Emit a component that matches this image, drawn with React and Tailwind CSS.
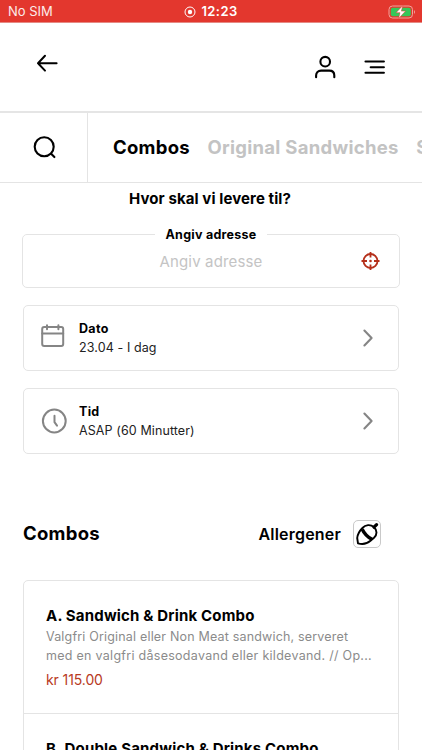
import React, { useState } from 'react';

const categories = ['Combos', 'Original Sandwiches', 'Salater'];

const ChevronIcon = () => (
  <svg width="12" height="20" viewBox="0 0 12 20" fill="none" stroke="#858585" strokeWidth="2.1" strokeLinecap="round" strokeLinejoin="round">
    <path d="M2.4 2.6 L9.6 10 L2.4 17.4" />
  </svg>
);

const CalendarIcon = () => (
  <svg className="-mt-[5px]" width="26" height="26" viewBox="0 0 26 26" fill="none" stroke="#858585" strokeWidth="2" strokeLinecap="round">
    <rect x="1.2" y="4" width="21" height="19" rx="2" />
    <path d="M1.2 10.5 H22.2 M6 2.2 V6.2 M17.4 2.2 V6.2" />
  </svg>
);

const ClockIcon = () => (
  <svg width="26" height="26" viewBox="0 0 26 26" fill="none" stroke="#858585" strokeWidth="2" strokeLinecap="round" strokeLinejoin="round">
    <circle cx="13.3" cy="13" r="11.4" />
    <path d="M13.5 7.8 V14.2 L16 17.6" />
  </svg>
);

const StatusBar = () => (
  <div className="relative flex h-[23px] items-center justify-between border-b border-[#e58a84] bg-[#e3372e] pr-[6px] pl-2 text-white">
    <span className="mt-[2px] text-[13px] opacity-90">No SIM</span>
    <div className="absolute inset-x-0 top-0 flex h-6 items-center justify-center gap-[5px]">
      <svg width="12" height="12" viewBox="0 0 12 12" fill="none" stroke="white">
        <circle cx="6" cy="6" r="5" strokeWidth="1" />
        <circle cx="6" cy="6" r="2.2" fill="white" stroke="none" />
      </svg>
      <span className="text-[13px] font-semibold tracking-[0.4px]">12:23</span>
    </div>
    <svg className="mt-px" width="28" height="14" viewBox="0 0 28 14">
      <rect x="1" y="1" width="23.5" height="12" rx="3.5" fill="none" stroke="#f0a39b" />
      <rect x="2.8" y="2.8" width="20" height="8.4" rx="2" fill="#35c759" />
      <path d="M26 5 Q28 7 26 9 Z" fill="#f0a39b" />
      <path d="M14.8 .6 L8 7.7 H12 L10.6 13.4 L17.6 6.1 H13.4 Z" fill="white" stroke="#e3372e" strokeWidth=".5" />
    </svg>
  </div>
);

const Header = () => (
  <header className="flex h-[90px] items-start justify-between border-b-2 border-[#e5e5e5] pt-[29px] pr-[36px] pl-[36px]">
    <button className="mt-[1px]" aria-label="Tilbage">
      <svg width="22" height="20" viewBox="0 0 22 20" fill="none" stroke="black" strokeWidth="2" strokeLinecap="round" strokeLinejoin="round">
        <path d="M20.6 10.2 H2 M9 2.8 L2 10.2 L9 17.6" />
      </svg>
    </button>
    <div className="flex items-start gap-[27px]">
      <svg className="mt-[3px]" width="23" height="24" viewBox="0 0 23 24" fill="none" stroke="black" strokeWidth="2.1" strokeLinecap="round">
        <circle cx="11.2" cy="6.7" r="4.8" />
        <path d="M2.1 22.3 V20.5 C2.1 17.5 4.1 15.6 7.1 15.6 H15.3 C18.3 15.6 20.3 17.5 20.3 20.5 V22.3" />
      </svg>
      <svg className="mt-[7px]" width="22" height="16" viewBox="0 0 22 16" fill="none" stroke="black" strokeWidth="2.1" strokeLinecap="round">
        <path d="M1.5 2.5 H19.9 M6.7 8.3 H19.9 M1.5 13.8 H19.9" />
      </svg>
    </div>
  </header>
);

const AcornIcon = () => (
  <svg width="24" height="24" viewBox="0 0 24 24" fill="none" stroke="black" strokeWidth="1.9" strokeLinejoin="round">
    <path d="M3 21.3 L2.2 16 C2.5 12.5 4.5 9 7.4 6 C10.5 2.6 15.5 2.2 18.8 5 C22.4 8.2 22.3 12.8 19 15.8 L15.5 18.8 C12 21.8 8 22.8 3 21.3 Z" />
    <path d="M7.2 7.2 C9 11 12.5 15 17 17.3" strokeWidth="3.4" />
    <path d="M19 5.2 L21.6 2.6" strokeWidth="3.2" strokeLinecap="round" />
  </svg>
);

const OptionRow = ({ icon, title, value }) => (
  <button className="flex h-[66px] w-full items-center rounded-[5px] border border-[#e4e4e4] pr-[24px] pl-[17px] text-left">
    <span className="w-[38px]">{icon}</span>
    <span className="flex-1">
      <span className="block text-[12.5px] leading-[19px] font-bold tracking-[0.3px]">{title}</span>
      <span className="block text-[12.5px] leading-[19px] tracking-[0.1px] text-[#222]">{value}</span>
    </span>
    <ChevronIcon />
  </button>
);

const App = () => {
  const [active, setActive] = useState('Combos');

  return (
    <div className="h-[750px] w-[422px] overflow-hidden bg-white font-['Inter',sans-serif] text-black">
      <StatusBar />
      <Header />

      {/* Category tabs */}
      <nav className="flex h-[70px] overflow-hidden border-b border-[#e4e4e4]">
        <div className="flex w-[88px] shrink-0 items-center border-r border-[#e4e4e4] pl-[33px]">
          <svg width="24" height="24" viewBox="0 0 24 24" fill="none" stroke="black" strokeWidth="2.1" strokeLinecap="round">
            <circle cx="11.2" cy="10.8" r="9.5" />
            <path d="M18.1 17.8 L21.4 21.1" />
          </svg>
        </div>
        <div className="flex items-center gap-[17.5px] pt-px pl-[25px]">
          {categories.map((name) => (
            <button
              key={name}
              onClick={() => setActive(name)}
              className={`text-[18.5px] font-bold tracking-[0.28px] whitespace-nowrap ${active === name ? 'text-black' : 'text-[#c3c3c3]'}`}
            >
              {name}
            </button>
          ))}
        </div>
      </nav>

      <main className="px-[23px]">
        <h2 className="pt-[5px] pr-[2px] text-center text-[15px] leading-[22px] font-bold tracking-[0.1px]">Hvor skal vi levere til?</h2>

        {/* Delivery address */}
        <fieldset className="-mx-px mt-[14px] h-[64px] rounded-[5px] border border-[#e4e4e4]">
          <legend className="mx-auto px-[11px] pt-px text-[12.5px] leading-[19px] font-bold tracking-[0.25px]">Angiv adresse</legend>
          <div className="flex h-[34px] items-center pr-[19px] pl-[39px]">
            <input
              className="w-full min-w-0 flex-1 pt-[3px] text-center text-[15px] tracking-[0.15px] outline-none placeholder:text-[#c4c4c4]"
              placeholder="Angiv adresse"
            />
            <svg width="20" height="20" viewBox="0 0 20 20" fill="none" stroke="#b5301b" strokeWidth="1.8">
              <circle cx="10.5" cy="10" r="7" />
              <path d="M10.5 1 V6.5 M10.5 13.5 V19 M1.5 10 H7 M14 10 H19.5" />
              <circle cx="10.5" cy="10" r="1.3" fill="#b5301b" stroke="none" />
            </svg>
          </div>
        </fieldset>

        <div className="mt-[17px] space-y-[17px]">
          <OptionRow icon={<CalendarIcon />} title="Dato" value="23.04 - I dag" />
          <OptionRow icon={<ClockIcon />} title="Tid" value="ASAP (60 Minutter)" />
        </div>

        <div className="mt-[65px] flex h-[29px] items-center justify-between pr-[18px]">
          <h2 className="text-[18.5px] font-bold tracking-[0.28px]">Combos</h2>
          <div className="flex items-center gap-3">
            <span className="text-[16px] font-semibold tracking-[0.2px]">Allergener</span>
            <span className="flex h-[28px] w-[28px] items-center justify-center rounded-[5px] border border-[#c9c9c9]">
              <AcornIcon />
            </span>
          </div>
        </div>

        <section className="mt-[32px] rounded-t-[5px] border border-[#e4e4e4]">
          <article className="h-[133px] border-b border-[#e4e4e4] px-[22px] pt-[24px]">
            <h3 className="text-[15px] leading-[21px] font-bold tracking-[0.18px]">A. Sandwich &amp; Drink Combo</h3>
            <p className="pt-px text-[12.5px] leading-[19px] whitespace-nowrap text-[#8b8b8b]">
              <span className="block tracking-[0.18px]">Valgfri Original eller Non Meat sandwich, serveret</span>
              <span className="block tracking-[0.28px]">med en valgfri dåsesodavand eller kildevand. // Op...</span>
            </p>
            <p className="mt-[4px] text-[14px] leading-[22px] tracking-[-0.1px] text-[#b83a23]">kr 115.00</p>
          </article>
          <article className="h-[133px] px-[22px] pt-[24px]">
            <h3 className="text-[15px] leading-[21px] font-bold tracking-[0.18px]">B. Double Sandwich &amp; Drinks Combo</h3>
          </article>
        </section>
      </main>
    </div>
  );
};

export default App;
